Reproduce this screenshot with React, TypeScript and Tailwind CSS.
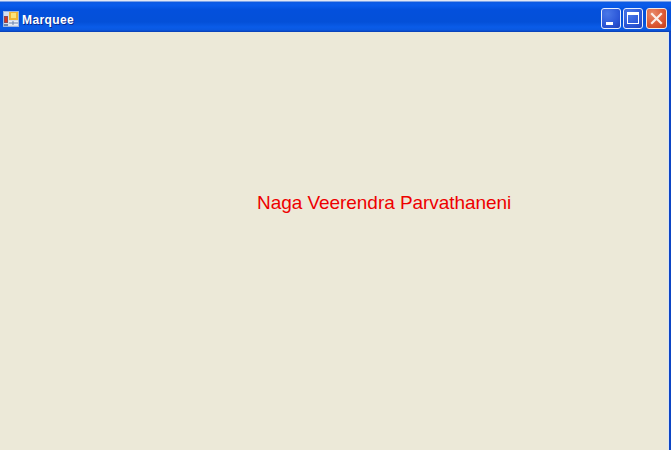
export default function App() {
  return (
    <div className="flex h-[450px] w-[671px] flex-col overflow-hidden bg-[#ece9d8] font-['Liberation_Sans',sans-serif]">
      <div className="flex h-[32px] shrink-0 items-center justify-between bg-[linear-gradient(180deg,#e4e8f4_0px,#e4e8f4_1px,#0f5ae0_2px,#0a5cec_5px,#0450dc_10px,#0450d8_22px,#0a5ce8_27px,#0a58e0_30px,#0a3cb0_32px)] pt-[6px] pr-[4px] pl-[3px]">
        <div className="flex items-center gap-[3px]">
          <svg width="16" height="16" viewBox="0 0 16 16" className="shrink-0">
            <rect x="0" y="0" width="16" height="16" fill="#9fb6dc" />
            <rect x="1" y="1" width="14" height="14" fill="#d5dfef" />
            <rect x="6" y="1" width="9" height="8" fill="#f2b632" />
            <rect x="8" y="2" width="5" height="5" fill="#fbe27a" />
            <rect x="1" y="5" width="4" height="7" fill="#8a4a58" />
            <rect x="2" y="6" width="2" height="5" fill="#d8331f" />
            <rect x="6" y="10" width="9" height="4" fill="#e8eef6" />
            <path d="M6 12H15M10 10V14" stroke="#6a84ad" />
            <rect x="1" y="13" width="4" height="2" fill="#6a84ad" />
          </svg>
          <span className="pt-[1px] text-[12px] leading-[16px] font-bold tracking-[0.4px] text-white [text-shadow:1px_1px_#0a2a90]">Marquee</span>
        </div>
        <div className="mb-[2px] flex items-center">
          <div className="flex h-[21px] w-[20px] items-end rounded-[3px] border border-[#e8eefc] bg-[radial-gradient(circle_at_30%_25%,#4a78e8,#2c58d8_60%,#2040b8)] pb-[3px] pl-[4px]">
            <div className="h-[3px] w-[7px] bg-white" />
          </div>
          <div className="ml-[2px] flex h-[21px] w-[20px] items-center justify-center rounded-[3px] border border-[#e8eefc] bg-[radial-gradient(circle_at_30%_25%,#4a78e8,#2c58d8_60%,#2040b8)]">
            <div className="h-[12px] w-[12px] border border-t-[3px] border-white" />
          </div>
          <div className="ml-[3px] flex h-[21px] w-[21px] items-center justify-center rounded-[3px] border border-[#f4e8e0] bg-[radial-gradient(circle_at_30%_25%,#e88a68,#dc5a36_55%,#c43c18)]">
            <svg width="13" height="13" viewBox="0 0 13 13">
              <path d="M2 2L11 11M11 2L2 11" stroke="#fbeee8" strokeWidth="2.2" strokeLinecap="square" />
            </svg>
          </div>
        </div>
      </div>
      <div className="flex min-h-0 flex-1">
        <div className="flex-1 pt-[159px] pl-[257px]">
          <span className="block text-[19px] leading-[24px] tracking-[-0.05px] text-[#ee0000]">Naga Veerendra Parvathaneni</span>
        </div>
        <div className="h-full w-[1px] bg-[#dce6f4]" />
        <div className="h-full w-[2px] bg-[#0d45c4]" />
      </div>
    </div>
  );
}
